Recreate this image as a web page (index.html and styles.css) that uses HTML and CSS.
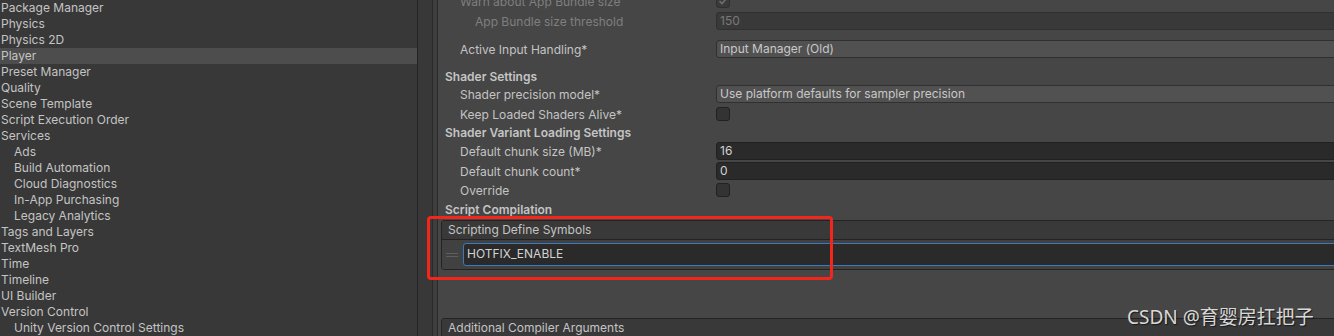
FILE: index.html
```html
<!DOCTYPE html>
<html lang="en">
<head>
<meta charset="UTF-8" />
<title>Project Settings — Player</title>
<link rel="stylesheet" href="styles.css">
</head>
<body>
  <div class="window">
    <ul class="sidebar">
      <li>Package Manager</li>
      <li>Physics</li>
      <li>Physics 2D</li>
      <li class="selected">Player</li>
      <li>Preset Manager</li>
      <li>Quality</li>
      <li>Scene Template</li>
      <li>Script Execution Order</li>
      <li>Services</li>
      <li class="sub">Ads</li>
      <li class="sub">Build Automation</li>
      <li class="sub">Cloud Diagnostics</li>
      <li class="sub">In-App Purchasing</li>
      <li class="sub">Legacy Analytics</li>
      <li>Tags and Layers</li>
      <li>TextMesh Pro</li>
      <li>Time</li>
      <li>Timeline</li>
      <li>UI Builder</li>
      <li>Version Control</li>
      <li class="sub">Unity Version Control Settings</li>
    </ul>
    <div class="splitter"></div>
    <div class="gutter"></div>

    <div class="inspector">
      <div class="row first gap2">
        <span class="label disabled">Warn about App Bundle size</span>
        <span class="checkbox disabled">
          <svg width="10" height="10" viewBox="0 0 10 10"><path d="M1.5 5.2 4 7.6 8.6 2.2" fill="none" stroke="#6f6f6f" stroke-width="1.6"/></svg>
        </span>
      </div>
      <div class="row gap10">
        <span class="label disabled deep">App Bundle size threshold</span>
        <span class="field disabled">150</span>
      </div>
      <div class="row gap9">
        <span class="label">Active Input Handling*</span>
        <span class="field popup">Input Manager (Old)</span>
      </div>

      <div class="row gap0"><span class="header">Shader Settings</span></div>
      <div class="row gap2">
        <span class="label">Shader precision model*</span>
        <span class="field popup">Use platform defaults for sampler precision</span>
      </div>
      <div class="row gap0">
        <span class="label">Keep Loaded Shaders Alive*</span>
        <span class="checkbox"></span>
      </div>

      <div class="row gap1"><span class="header">Shader Variant Loading Settings</span></div>
      <div class="row gap2">
        <span class="label">Default chunk size (MB)*</span>
        <span class="field">16</span>
      </div>
      <div class="row gap1">
        <span class="label">Default chunk count*</span>
        <span class="field">0</span>
      </div>
      <div class="row gap1">
        <span class="label">Override</span>
        <span class="checkbox"></span>
      </div>

      <div class="row gap2"><span class="header">Script Compilation</span></div>
      <div class="list-box defines">
        <div class="list-header">Scripting Define Symbols</div>
        <div class="list-body">
          <div class="list-item">
            <span class="handle"></span>
            <span class="item-field">HOTFIX_ENABLE</span>
          </div>
        </div>
      </div>
      <div class="list-box">
        <div class="list-header">Additional Compiler Arguments</div>
      </div>
    </div>
  </div>

  <!-- screenshot annotation -->
  <div class="highlight"></div>
  <div class="watermark">CSDN @育婴房扛把子</div>
</body>
</html>
```

FILE: styles.css
```css
html, body {
  margin: 0;
  padding: 0;
  height: 100%;
  overflow: hidden;
  background: #383838;
  font-family: Inter, "Noto Sans", sans-serif;
  font-size: 12px;
  color: #c4c4c4;
}
.window {
  display: flex;
  height: 336px;
}

/* left settings tree */
.sidebar {
  list-style: none;
  margin: 0;
  padding: 0;
  width: 417px;
  flex-shrink: 0;
  background: #383838;
}
.sidebar li {
  height: 16px;
  line-height: 16px;
  padding-left: 1px;
  white-space: nowrap;
}
.sidebar li.sub {
  padding-left: 14px;
}
.sidebar li.selected {
  background: #4d4d4d;
}
.splitter {
  width: 1px;
  background: #232323;
  flex-shrink: 0;
}
.gutter {
  width: 4px;
  margin-left: 14px;
  background: #3e3e3e;
  border-left: 1px solid #2a2a2a;
  border-right: 1px solid #2a2a2a;
  flex-shrink: 0;
}

/* inspector */
.inspector {
  flex: 1;
  background: #464646;
  padding-left: 7px;
  margin-right: -30px;
}
.row {
  display: flex;
  align-items: center;
  height: 18px;
}
.row.first { margin-top: -8px; }
.gap0 { margin-bottom: 0; }
.gap1 { margin-bottom: 1px; }
.gap2 { margin-bottom: 2px; }
.gap9 { margin-bottom: 9px; }
.gap10 { margin-bottom: 10px; }

.label {
  width: 271px;
  padding-left: 15px;
  box-sizing: border-box;
  flex-shrink: 0;
  white-space: nowrap;
}
.label.deep { padding-left: 30px; }
.label.disabled { color: #7f7f7f; }
.header {
  font-weight: 600;
  white-space: nowrap;
}
.field {
  flex: 1;
  height: 18px;
  box-sizing: border-box;
  border: 1px solid #212121;
  border-radius: 3px;
  background: #2a2a2a;
  color: #d2d2d2;
  padding-left: 3px;
  line-height: 16px;
  white-space: nowrap;
}
.field.disabled {
  background: #393939;
  border-color: #303030;
  color: #7a7a7a;
}
.field.popup {
  background: #515151;
  border-color: #303030;
  color: #c8c8c8;
}
.checkbox {
  width: 14px;
  height: 14px;
  box-sizing: border-box;
  border: 1px solid #212121;
  border-radius: 3px;
  background: #333333;
  display: flex;
  align-items: center;
  justify-content: center;
}
.checkbox.disabled {
  background: #3a3a3a;
  border-color: #303030;
}

/* reorderable lists */
.list-box {
  margin-left: -4px;
  border: 1px solid #232323;
  border-radius: 3px;
  overflow: hidden;
}
.list-box.defines {
  margin-top: 0;
  margin-bottom: 48px;
}
.list-header {
  height: 18px;
  line-height: 18px;
  padding-left: 6px;
  background: #393939;
}
.list-body {
  background: #414141;
  border-top: 1px solid #232323;
  padding: 3px 0 3px 4px;
}
.list-item {
  display: flex;
  align-items: center;
}
.handle {
  width: 12px;
  height: 2px;
  border-top: 1px solid #5e5e5e;
  border-bottom: 1px solid #5e5e5e;
  margin-right: 5px;
}
.item-field {
  flex: 1;
  height: 23px;
  box-sizing: border-box;
  border: 1px solid #3a79bb;
  border-radius: 3px;
  background: #2a2a2a;
  color: #d2d2d2;
  padding-left: 3px;
  line-height: 19px;
}

/* annotation on top of the screenshot */
.highlight {
  position: absolute;
  left: 427px;
  top: 216px;
  width: 406px;
  height: 64px;
  box-sizing: border-box;
  border: 3px solid #f2261b;
  border-radius: 4px;
}
.watermark {
  position: absolute;
  left: 1127px;
  top: 302px;
  font-family: "Noto Sans", "Noto Sans CJK SC", sans-serif;
  font-size: 19px;
  color: #d8d8d8;
  text-shadow: 1px 1px 1px #1a1a1a;
  white-space: nowrap;
}
```
